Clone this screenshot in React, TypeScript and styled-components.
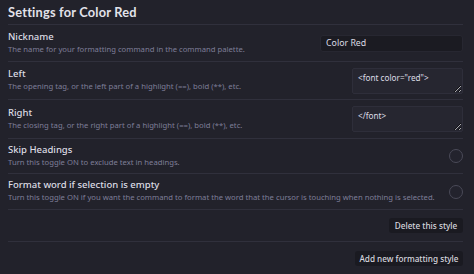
import React from "react";
import styled, { createGlobalStyle } from "styled-components";

const Global = createGlobalStyle`
  html, body { margin: 0; padding: 0; background: #22222b; }
  body { font-family: "Noto Sans", "Open Sans", sans-serif; color: #dcdce4; }
  * { box-sizing: border-box; }
`;

const Page = styled.div`
  width: 474px;
  height: 274px;
  padding: 0 11px 0 8px;
  background: #22222b;
  overflow: hidden;
`;

const Title = styled.h2`
  margin: 0;
  height: 25px;
  display: flex;
  align-items: center;
  font-family: "Lato", "Noto Sans", sans-serif;
  font-size: 12.8px;
  font-weight: 700;
  color: #e2e2ea;
  letter-spacing: 0.2px;
  border-bottom: 1px solid #30303c;
`;

const Row = styled.div<{ $h: number }>`
  height: ${(p) => p.$h}px;
  display: flex;
  align-items: center;
  justify-content: space-between;
  gap: 12px;
  border-bottom: 1px solid #30303c;
  &:last-child { border-bottom: none; }
`;

const Info = styled.div`
  display: flex;
  flex-direction: column;
  gap: 1px;
  margin-top: -2px;
  min-width: 0;
`;

const Label = styled.div`
  font-size: 9.5px;
  font-weight: 500;
  line-height: 13px;
  color: #dcdce4;
`;

const Desc = styled.div`
  font-size: 7.7px;
  line-height: 11px;
  color: #7e7e98;
  white-space: nowrap;
`;

const TextInput = styled.input`
  width: 143px;
  height: 17px;
  flex: none;
  background: #1b1b22;
  border: 1px solid #272731;
  border-radius: 3px;
  color: #dcdce4;
  font-family: "Noto Sans", sans-serif;
  font-size: 8.8px;
  padding: 0 5px;
  outline: none;
`;

const Area = styled.textarea`
  width: 111px;
  height: 26px;
  flex: none;
  background: #262630;
  border: 1px solid #2e2e3a;
  border-radius: 2px;
  color: #dcdce4;
  font-family: "Noto Sans", sans-serif;
  font-size: 8.2px;
  line-height: 11px;
  padding: 3px 5px;
  resize: vertical;
  outline: none;
`;

const Toggle = styled.div`
  width: 14px;
  height: 14px;
  flex: none;
  border-radius: 50%;
  border: 1.5px solid #4a4a58;
  background: #23232d;
`;

const Button = styled.button<{ $w: number }>`
  width: ${(p) => p.$w}px;
  height: 15px;
  margin-left: auto;
  background: #1a1a21;
  border: none;
  border-radius: 3px;
  color: #d6d6de;
  font-family: "Noto Sans", sans-serif;
  font-size: 8.2px;
  font-weight: 500;
  padding: 0;
  cursor: pointer;
`;

export default function App() {
  return (
    <Page>
      <Global />
      <Title>Settings for Color Red</Title>
      <Row $h={37}>
        <Info>
          <Label>Nickname</Label>
          <Desc>The name for your formatting command in the command palette.</Desc>
        </Info>
        <TextInput defaultValue="Color Red" />
      </Row>
      <Row $h={38}>
        <Info>
          <Label>Left</Label>
          <Desc>The opening tag, or the left part of a highlight (==), bold (**), etc.</Desc>
        </Info>
        <Area defaultValue={'<font color="red">'} />
      </Row>
      <Row $h={39}>
        <Info>
          <Label>Right</Label>
          <Desc>The closing tag, or the right part of a highlight (==), bold (**), etc.</Desc>
        </Info>
        <Area defaultValue="</font>" />
      </Row>
      <Row $h={35}>
        <Info>
          <Label>Skip Headings</Label>
          <Desc>Turn this toggle ON to exclude text in headings.</Desc>
        </Info>
        <Toggle />
      </Row>
      <Row $h={36}>
        <Info>
          <Label>Format word if selection is empty</Label>
          <Desc>
            Turn this toggle ON if you want the command to format the word that the cursor is touching when nothing is selected.
          </Desc>
        </Info>
        <Toggle />
      </Row>
      <Row $h={32}>
        <Button $w={74}>Delete this style</Button>
      </Row>
      <Row $h={33}>
        <Button $w={108}>Add new formatting style</Button>
      </Row>
    </Page>
  );
}
